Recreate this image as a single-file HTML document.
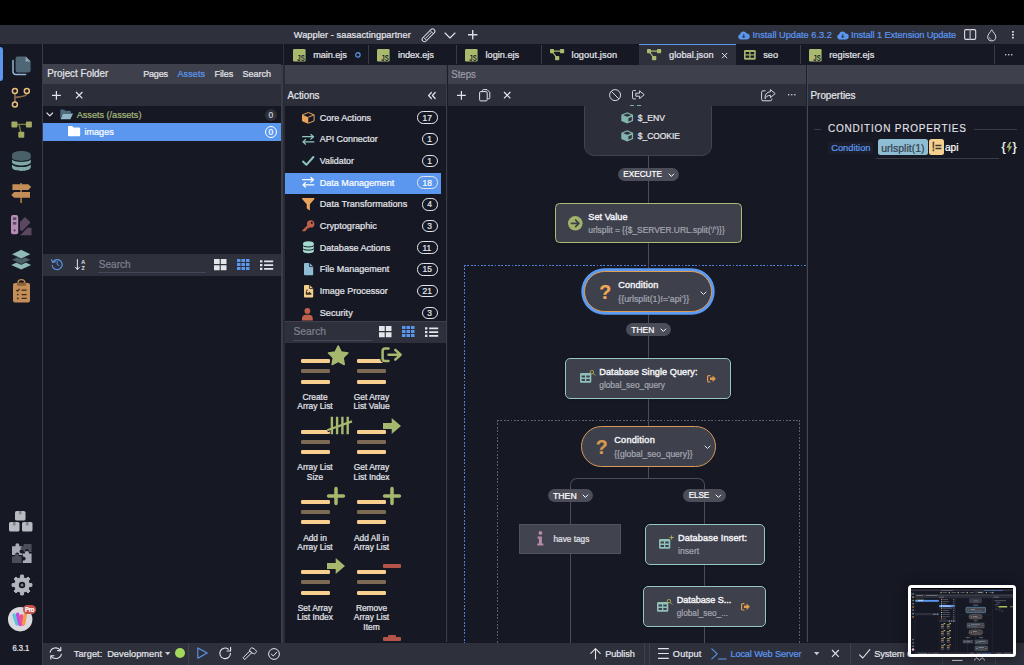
<!DOCTYPE html><html lang="en"><head><meta charset="utf-8"><title>Wappler - saasactingpartner</title><style>

html,body{margin:0;padding:0;background:#161824;}
body{width:1024px;height:665px;overflow:hidden;position:relative;font-family:"Liberation Sans",sans-serif;color:#e4e5ea;}
#app{position:absolute;left:0;top:0;width:1024px;height:665px;overflow:hidden;}
#app div,#app svg,#app span{position:absolute;box-sizing:border-box;}
#app span{white-space:nowrap;line-height:14px;height:14px;-webkit-text-stroke:0.22px currentColor;transform:scaleY(1.07);transform-origin:50% 52%;}
#app svg{overflow:visible;}

</style></head><body><div id="app">
<div style="left:0px;top:0px;width:1024px;height:25px;background:#000;"></div>
<div style="left:0px;top:25px;width:1024px;height:19px;background:#2e303c;"></div>
<div style="left:0px;top:44px;width:42px;height:621px;background:#161824;"></div>
<div style="left:42px;top:44px;width:1px;height:621px;background:#3a3c48;"></div>
<div style="left:0px;top:47px;width:2.5px;height:34px;background:#5b97ee;border-radius:0 3px 3px 0;"></div>
<div style="left:43px;top:64.2px;width:238.2px;height:19.8px;background:#3e404c;"></div>
<div style="left:43px;top:84px;width:238.2px;height:21.6px;background:#2c2e3a;"></div>
<div style="left:43px;top:123px;width:238.2px;height:18px;background:#5b97ee;"></div>
<div style="left:43px;top:254px;width:238.2px;height:22px;background:#2e303c;"></div>
<div style="left:97.5px;top:271.5px;width:108.5px;height:1.0px;background:#44475a;"></div>
<div style="left:283px;top:44px;width:1.2px;height:20.5px;background:#2e303c;"></div>
<div style="left:281.2px;top:64.5px;width:1.4px;height:578.0px;background:#3a3c48;"></div>
<div style="left:282.6px;top:64.5px;width:2.0px;height:578.0px;background:#292b37;"></div>
<div style="left:368px;top:45px;width:1px;height:19px;background:#3a3c48;"></div>
<div style="left:456px;top:45px;width:1px;height:19px;background:#3a3c48;"></div>
<div style="left:541px;top:45px;width:1px;height:19px;background:#3a3c48;"></div>
<div style="left:800px;top:45px;width:1px;height:19px;background:#3a3c48;"></div>
<div style="left:994px;top:45px;width:1px;height:19px;background:#3a3c48;"></div>
<div style="left:639px;top:44px;width:97px;height:21px;background:#2e303c;border-top:1.5px solid #5b97ee;"></div>
<div style="left:284.6px;top:64.5px;width:739.4px;height:19.5px;background:#3e404c;"></div>
<div style="left:445.9px;top:64.5px;width:1.1px;height:577.5px;background:#3a3c48;"></div>
<div style="left:447px;top:64.5px;width:1px;height:577.5px;background:#1c1e29;"></div>
<div style="left:806px;top:64.5px;width:1px;height:577.5px;background:#1c1e29;"></div>
<div style="left:807px;top:64.5px;width:1px;height:577.5px;background:#454753;"></div>
<div style="left:284.6px;top:84px;width:161.3px;height:21.6px;background:#2c2e3a;"></div>
<div style="left:448px;top:84px;width:358px;height:21.6px;background:#2c2e3a;"></div>
<div style="left:808px;top:84px;width:216px;height:21.6px;background:#2c2e3a;"></div>
<div style="left:284.6px;top:172.5px;width:156.4px;height:21.5px;background:#5b97ee;"></div>
<div style="left:284.6px;top:320.5px;width:161.3px;height:22.5px;background:#2e303c;border-top:1px solid #3e404c;"></div>
<div style="left:293px;top:339.5px;width:79px;height:0.8px;background:#44475a;"></div>
<div style="left:43px;top:642.5px;width:981px;height:22.5px;background:#2e303c;"></div>
<div style="left:188px;top:643px;width:1px;height:22px;background:#3f414d;"></div>
<div style="left:644px;top:643px;width:1px;height:22px;background:#3f414d;"></div>
<div style="left:649px;top:643px;width:1px;height:22px;background:#3f414d;"></div>
<div style="left:850px;top:643px;width:1px;height:22px;background:#3f414d;"></div>
<div style="left:942px;top:643px;width:1px;height:22px;background:#3f414d;"></div>
<div style="left:995px;top:643px;width:1px;height:22px;background:#3f414d;"></div>
<div style="left:464px;top:265px;width:342px;height:1px;background:repeating-linear-gradient(90deg,#4f82d6 0 1.8px,transparent 1.8px 3.4px);"></div>
<div style="left:464px;top:265px;width:1px;height:377.5px;background:repeating-linear-gradient(180deg,#4f82d6 0 1.8px,transparent 1.8px 3.4px);"></div>
<div style="left:497px;top:420px;width:302.5px;height:1px;background:repeating-linear-gradient(90deg,#5e606c 0 1.8px,transparent 1.8px 3.4px);"></div>
<div style="left:497px;top:420px;width:1px;height:222.5px;background:repeating-linear-gradient(180deg,#5e606c 0 1.8px,transparent 1.8px 3.4px);"></div>
<div style="left:799px;top:420px;width:1px;height:222.5px;background:repeating-linear-gradient(180deg,#5e606c 0 1.8px,transparent 1.8px 3.4px);"></div>
<div style="left:647.5px;top:156px;width:1.0px;height:322px;background:#4b4d59;"></div>
<div style="left:570px;top:478px;width:135px;height:22px;border:1px solid #4b4d59;border-bottom:none;border-radius:7px 7px 0 0;"></div>
<div style="left:570px;top:495px;width:1px;height:147.5px;background:#4b4d59;"></div>
<div style="left:704px;top:495px;width:1px;height:147.5px;background:#4b4d59;"></div>
<div style="left:584px;top:96px;width:128px;height:60px;background:#2c2e3a;border:1px solid #41434f;border-radius:10px;"></div>
<div style="left:448px;top:84px;width:358px;height:21.6px;background:#2c2e3a;"></div>
<div style="left:617.5px;top:168px;width:61.5px;height:13.3px;background:#4b4d59;border-radius:7px;"></div>
<div style="left:625.5px;top:323px;width:45.0px;height:13.3px;background:#4b4d59;border-radius:7px;"></div>
<div style="left:547.5px;top:488.8px;width:45.5px;height:13.3px;background:#4b4d59;border-radius:7px;"></div>
<div style="left:683px;top:488.8px;width:42.75px;height:13.3px;background:#4b4d59;border-radius:7px;"></div>
<div style="left:554.5px;top:203px;width:187.5px;height:40.3px;background:#3e404c;border:1.5px solid #aabf74;border-radius:4.5px;box-shadow:0 0 3px rgba(0,0,0,.45);"></div>
<div style="left:584.2px;top:271.1px;width:127.8px;height:41.2px;background:#3e404c;border:1.4px solid #e09c55;border-radius:21px;box-shadow:0 0 0 2.7px #5b9cf2;"></div>
<div style="left:565px;top:358px;width:166px;height:40.6px;background:#3e404c;border:1.6px solid #93c7c2;border-radius:5px;box-shadow:0 0 3px rgba(0,0,0,.45);"></div>
<div style="left:580.5px;top:426px;width:135.5px;height:41.2px;background:#3e404c;border:1.5px solid #d89a55;border-radius:21px;"></div>
<div style="left:519px;top:524px;width:102px;height:30px;background:#41434f;border:1px solid #50525e;"></div>
<div style="left:644.5px;top:524px;width:120.0px;height:40.6px;background:#3e404c;border:1.6px solid #93c7c2;border-radius:5px;box-shadow:0 0 3px rgba(0,0,0,.45);"></div>
<div style="left:643px;top:586px;width:122.8px;height:41px;background:#3e404c;border:1.6px solid #93c7c2;border-radius:5px;box-shadow:0 0 3px rgba(0,0,0,.45);"></div>
<div style="left:43px;top:642.5px;width:981px;height:22.5px;background:#2e303c;"></div>
<div style="left:188px;top:643px;width:1px;height:22px;background:#3f414d;"></div>
<div style="left:644px;top:643px;width:1px;height:22px;background:#3f414d;"></div>
<div style="left:649px;top:643px;width:1px;height:22px;background:#3f414d;"></div>
<div style="left:850px;top:643px;width:1px;height:22px;background:#3f414d;"></div>
<div style="left:942px;top:643px;width:1px;height:22px;background:#3f414d;"></div>
<div style="left:995px;top:643px;width:1px;height:22px;background:#3f414d;"></div>
<div style="left:417.25px;top:111.39999999999999px;width:20.75px;height:12.4px;border:1.1px solid #e4e5ea;border-radius:6.2px;"></div>
<div style="left:421.75px;top:133.08px;width:16.25px;height:12.4px;border:1.1px solid #e4e5ea;border-radius:6.2px;"></div>
<div style="left:421.75px;top:154.76px;width:16.25px;height:12.4px;border:1.1px solid #e4e5ea;border-radius:6.2px;"></div>
<div style="left:417.25px;top:176.44px;width:20.75px;height:12.4px;border:1.1px solid #e4e5ea;border-radius:6.2px;"></div>
<div style="left:421.75px;top:198.12px;width:16.25px;height:12.4px;border:1.1px solid #e4e5ea;border-radius:6.2px;"></div>
<div style="left:421.75px;top:219.8px;width:16.25px;height:12.4px;border:1.1px solid #e4e5ea;border-radius:6.2px;"></div>
<div style="left:417.25px;top:241.48px;width:20.75px;height:12.4px;border:1.1px solid #e4e5ea;border-radius:6.2px;"></div>
<div style="left:417.25px;top:263.16px;width:20.75px;height:12.4px;border:1.1px solid #e4e5ea;border-radius:6.2px;"></div>
<div style="left:417.25px;top:284.84px;width:20.75px;height:12.4px;border:1.1px solid #e4e5ea;border-radius:6.2px;"></div>
<div style="left:421.75px;top:306.52000000000004px;width:16.25px;height:12.4px;border:1.1px solid #e4e5ea;border-radius:6.2px;"></div>
<div style="left:814.25px;top:128.5px;width:7.0px;height:1.0px;background:#3a3c48;"></div>
<div style="left:973.5px;top:128.5px;width:43.75px;height:1.0px;background:#3a3c48;"></div>
<div style="left:828px;top:141.5px;width:44.5px;height:12.0px;background:#1b1e2b;border-radius:2px;"></div>
<div style="left:878px;top:139.25px;width:49.5px;height:15.75px;background:#8fbdd3;border-radius:2.5px;"></div>
<div style="left:929.25px;top:139.25px;width:14.5px;height:15.75px;background:#f6d08d;border-radius:2.5px;"></div>
<div style="left:875.5px;top:157.6px;width:123.0px;height:0.9px;background:#3a3c48;"></div>
<svg style="left:421.8px;top:28.5px;" width="13" height="12.6" viewBox="0 0 13 12.6"><g transform="rotate(-45 6.5 6.3)"><rect x="-1.6" y="4" width="16.2" height="4.6" rx="2.3" fill="none" stroke="#dcdde2" stroke-width="1"/><path d="M1.6 4.2 V8.4 M11 4.2 V8.4 M2 6.3 H10.6" stroke="#dcdde2" stroke-width="0.9"/></g></svg>
<svg style="left:445px;top:32.7px;" width="10" height="5" viewBox="0 0 10 5"><path d="M0 0 L5 5 L10 0" fill="none" stroke="#e4e5ea" stroke-width="1.1" stroke-linecap="round" stroke-linejoin="round"/></svg>
<svg style="left:467.5px;top:30.000000000000004px;" width="9.4" height="9.4" viewBox="0 0 9.4 9.4"><path d="M4.7 0 V9.4 M0 4.7 H9.4" fill="none" stroke="#dcdde2" stroke-width="1.4"/></svg>
<svg style="left:738.2px;top:30.5px;" width="11.5" height="8.5" viewBox="0 0 11.5 8.5"><path d="M2.6 8.4 a2.6 2.6 0 0 1 -0.5 -5.1 a3.4 3.4 0 0 1 6.5 -0.7 a2.9 2.9 0 0 1 0.4 5.8 Z" fill="#5b97ee"/><path d="M5.75 3.2 V6.6 M4.3 5.3 L5.75 6.8 L7.2 5.3" fill="none" stroke="#2e303c" stroke-width="1"/></svg>
<svg style="left:836.7px;top:30.5px;" width="11.5" height="8.5" viewBox="0 0 11.5 8.5"><path d="M2.6 8.4 a2.6 2.6 0 0 1 -0.5 -5.1 a3.4 3.4 0 0 1 6.5 -0.7 a2.9 2.9 0 0 1 0.4 5.8 Z" fill="#5b97ee"/><path d="M5.75 3.2 V6.6 M4.3 5.3 L5.75 6.8 L7.2 5.3" fill="none" stroke="#2e303c" stroke-width="1"/></svg>
<svg style="left:963.8px;top:29.1px;" width="12.3" height="11" viewBox="0 0 12.3 11"><rect x="0.6" y="0.6" width="11.1" height="9.8" rx="1.3" fill="none" stroke="#dcdde2" stroke-width="1.1"/><path d="M6.15 0.6 V10.4" stroke="#9a9ca6" stroke-width="1.5"/></svg>
<svg style="left:986.75px;top:28.5px;" width="9.5" height="12" viewBox="0 0 9.5 12"><path d="M4.75 0.8 C6.2 3.2 8.8 5.6 8.8 7.8 a4.05 4.05 0 0 1 -8.1 0 C0.7 5.6 3.3 3.2 4.75 0.8 Z" fill="none" stroke="#dcdde2" stroke-width="1"/><path d="M2.2 8 a2.6 2.6 0 0 0 2.4 2.4" fill="none" stroke="#9a9ca6" stroke-width="0.9"/></svg>
<svg style="left:1012.3px;top:31px;" width="1.8" height="7.6" viewBox="0 0 1.8 7.6"><rect x="0" y="0" width="1.8" height="1.7" fill="#dcdde2"/><rect x="0" y="2.9" width="1.8" height="1.7" fill="#dcdde2"/><rect x="0" y="5.8" width="1.8" height="1.7" fill="#dcdde2"/></svg>
<svg style="left:292.8px;top:48.8px;" width="12.6" height="12.6" viewBox="0 0 12.6 12.6"><rect width="12.6" height="12.6" rx="1.3" fill="#a9b96e"/><text x="4.3" y="11.6" textLength="7.4" lengthAdjust="spacingAndGlyphs" font-family="Liberation Sans, sans-serif" font-weight="700" font-size="8.8" fill="#20222c">JS</text></svg>
<svg style="left:377.2px;top:48.8px;" width="12.6" height="12.6" viewBox="0 0 12.6 12.6"><rect width="12.6" height="12.6" rx="1.3" fill="#a9b96e"/><text x="4.3" y="11.6" textLength="7.4" lengthAdjust="spacingAndGlyphs" font-family="Liberation Sans, sans-serif" font-weight="700" font-size="8.8" fill="#20222c">JS</text></svg>
<svg style="left:464.8px;top:48.8px;" width="12.6" height="12.6" viewBox="0 0 12.6 12.6"><rect width="12.6" height="12.6" rx="1.3" fill="#a9b96e"/><text x="4.3" y="11.6" textLength="7.4" lengthAdjust="spacingAndGlyphs" font-family="Liberation Sans, sans-serif" font-weight="700" font-size="8.8" fill="#20222c">JS</text></svg>
<svg style="left:808.8px;top:48.8px;" width="12.6" height="12.6" viewBox="0 0 12.6 12.6"><rect width="12.6" height="12.6" rx="1.3" fill="#a9b96e"/><text x="4.3" y="11.6" textLength="7.4" lengthAdjust="spacingAndGlyphs" font-family="Liberation Sans, sans-serif" font-weight="700" font-size="8.8" fill="#20222c">JS</text></svg>
<svg style="left:355.1px;top:52.3px;" width="5.8" height="5.8" viewBox="0 0 5.8 5.8"><circle cx="2.9" cy="2.9" r="2.2" fill="none" stroke="#5b97ee" stroke-width="1.2"/></svg>
<svg style="left:549.6px;top:49px;" width="14.2" height="11.4" viewBox="0 0 14.2 11.4"><path d="M3.6 2.1 H10.6 M3 3.6 L6 7.6" fill="none" stroke="#a9b96e" stroke-width="1.1"/><rect x="0" y="0" width="4" height="4.2" rx="0.7" fill="#a9b96e"/><rect x="10" y="0" width="4.2" height="4.2" rx="0.7" fill="#a9b96e"/><rect x="5" y="7" width="4.3" height="4.3" rx="0.7" fill="#a9b96e"/></svg>
<svg style="left:647.1px;top:49px;" width="14.2" height="11.4" viewBox="0 0 14.2 11.4"><path d="M3.6 2.1 H10.6 M3 3.6 L6 7.6" fill="none" stroke="#a9b96e" stroke-width="1.1"/><rect x="0" y="0" width="4" height="4.2" rx="0.7" fill="#a9b96e"/><rect x="10" y="0" width="4.2" height="4.2" rx="0.7" fill="#a9b96e"/><rect x="5" y="7" width="4.3" height="4.3" rx="0.7" fill="#a9b96e"/></svg>
<svg style="left:721.9px;top:52.6px;" width="5.2" height="5.2" viewBox="0 0 5.2 5.2"><path d="M0 0 L5.2 5.2 M5.2 0 L0 5.2" fill="none" stroke="#e4e5ea" stroke-width="1"/></svg>
<svg style="left:744px;top:50.25px;" width="11.75" height="9.75" viewBox="0 0 11.75 9.75"><rect width="11.75" height="9.75" rx="1.2" fill="#a5b56b"/><path d="M1.6 2.1 h3.6 v2.2 h-3.6z M6.5 2.1 h3.6 v2.2 h-3.6z M1.6 5.6 h3.6 v2.2 h-3.6z M6.5 5.6 h3.6 v2.2 h-3.6z" fill="#161824"/></svg>
<svg style="left:1004.75px;top:54.25px;" width="7.5" height="1.5" viewBox="0 0 7.5 1.5"><circle cx="0.75" cy="0.75" r="0.75" fill="#e4e5ea"/><circle cx="3.75" cy="0.75" r="0.75" fill="#e4e5ea"/><circle cx="6.75" cy="0.75" r="0.75" fill="#e4e5ea"/></svg>
<svg style="left:52.35px;top:90.6px;" width="8.8" height="8.8" viewBox="0 0 8.8 8.8"><path d="M4.4 0 V8.8 M0 4.4 H8.8" fill="none" stroke="#e4e5ea" stroke-width="1.2"/></svg>
<svg style="left:76.3px;top:91.8px;" width="6.4" height="6.4" viewBox="0 0 6.4 6.4"><path d="M0 0 L6.4 6.4 M6.4 0 L0 6.4" fill="none" stroke="#e4e5ea" stroke-width="1.2"/></svg>
<svg style="left:46.7px;top:113.19999999999999px;" width="5.6" height="2.8" viewBox="0 0 5.6 2.8"><path d="M0 0 L2.8 2.8 L5.6 0" fill="none" stroke="#e4e5ea" stroke-width="1.1" stroke-linecap="round" stroke-linejoin="round"/></svg>
<svg style="left:60px;top:108.8px;" width="13.2" height="10.6" viewBox="0 0 13.2 10.6"><path d="M0.3 9.6 V1.4 a1 1 0 0 1 1 -1 h2.8 l1.2 1.3 h4.6 a1 1 0 0 1 1 1 v1.2 H3.2 Z" fill="#4f6a7a"/><path d="M0.5 10.2 L3 4.6 H13 L10.4 10.2 Z" fill="#8fb5c9"/></svg>
<svg style="left:68px;top:126.4px;" width="12.2" height="10.4" viewBox="0 0 12.2 10.4"><path d="M0 9.2 V1.2 a1.1 1.1 0 0 1 1.1 -1.1 h3.1 l1.4 1.5 h5.5 a1.1 1.1 0 0 1 1.1 1.1 v6.5 a1.1 1.1 0 0 1 -1.1 1.1 h-10 a1.1 1.1 0 0 1 -1.1 -1.1 Z" fill="#fff"/></svg>
<div style="left:265px;top:108.6px;width:12px;height:12.0px;background:#2e303c;border-radius:6px;"></div>
<div style="left:265px;top:126.2px;width:12px;height:12.0px;border:1px solid #fff;border-radius:6px;"></div>
<svg style="left:51px;top:258.3px;" width="12" height="12" viewBox="0 0 12 12"><path d="M2.2 3.6 A5 5 0 1 1 1.2 7.2" fill="none" stroke="#5b97ee" stroke-width="1.1" stroke-linecap="round"/><path d="M0.6 1.6 L1.6 4.4 L4.5 3.8" fill="none" stroke="#5b97ee" stroke-width="1.1" stroke-linecap="round" stroke-linejoin="round"/><path d="M6.2 3.6 V6.4 L8 7.6" fill="none" stroke="#5b97ee" stroke-width="1" stroke-linecap="round"/></svg>
<svg style="left:74.5px;top:258.8px;" width="11.5" height="11.5" viewBox="0 0 11.5 11.5"><path d="M2.4 0.5 V10.4 M0.4 8.2 L2.4 10.6 L4.4 8.2" fill="none" stroke="#e4e5ea" stroke-width="1" stroke-linecap="round" stroke-linejoin="round"/><text x="6.2" y="4.6" font-family="Liberation Sans, sans-serif" font-weight="700" font-size="5.4" fill="#e4e5ea">A</text><text x="6.4" y="10.8" font-family="Liberation Sans, sans-serif" font-weight="700" font-size="5.4" fill="#e4e5ea">Z</text></svg>
<svg style="left:213.9px;top:258.9px;" width="12.5" height="11.25" viewBox="0 0 12.5 11.25"><path d="M0 0 h5.7 v5 h-5.7z M6.8 0 h5.7 v5 h-5.7z M0 6.2 h5.7 v5 h-5.7z M6.8 6.2 h5.7 v5 h-5.7z" fill="#e4e5ea"/></svg>
<svg style="left:236.75px;top:258.9px;" width="12.5" height="11.25" viewBox="0 0 12.5 11.25"><path d="M0.0 0.0 h3.5 v3 h-3.5z M0.0 4.0 h3.5 v3 h-3.5z M0.0 8.0 h3.5 v3 h-3.5z M4.5 0.0 h3.5 v3 h-3.5z M4.5 4.0 h3.5 v3 h-3.5z M4.5 8.0 h3.5 v3 h-3.5z M9.0 0.0 h3.5 v3 h-3.5z M9.0 4.0 h3.5 v3 h-3.5z M9.0 8.0 h3.5 v3 h-3.5z " fill="#5b97ee"/></svg>
<svg style="left:259.75px;top:259.7px;" width="13.25" height="11" viewBox="0 0 13.25 11"><path d="M0 0.2 h2.4 v2.4 h-2.4z M0 3.95 h2.4 v2.4 h-2.4z M0 7.7 h2.4 v2.4 h-2.4z M4.1 0.6 h9.1 v1.6 h-9.1z M4.1 4.35 h9.1 v1.6 h-9.1z M4.1 8.1 h9.1 v1.6 h-9.1z" fill="#e4e5ea"/></svg>
<svg style="left:379px;top:326.2px;" width="12.5" height="11.25" viewBox="0 0 12.5 11.25"><path d="M0 0 h5.7 v5 h-5.7z M6.8 0 h5.7 v5 h-5.7z M0 6.2 h5.7 v5 h-5.7z M6.8 6.2 h5.7 v5 h-5.7z" fill="#e4e5ea"/></svg>
<svg style="left:402.25px;top:326.2px;" width="12.5" height="11.25" viewBox="0 0 12.5 11.25"><path d="M0.0 0.0 h3.5 v3 h-3.5z M0.0 4.0 h3.5 v3 h-3.5z M0.0 8.0 h3.5 v3 h-3.5z M4.5 0.0 h3.5 v3 h-3.5z M4.5 4.0 h3.5 v3 h-3.5z M4.5 8.0 h3.5 v3 h-3.5z M9.0 0.0 h3.5 v3 h-3.5z M9.0 4.0 h3.5 v3 h-3.5z M9.0 8.0 h3.5 v3 h-3.5z " fill="#5b97ee"/></svg>
<svg style="left:425.1px;top:326.9px;" width="13.25" height="11" viewBox="0 0 13.25 11"><path d="M0 0.2 h2.4 v2.4 h-2.4z M0 3.95 h2.4 v2.4 h-2.4z M0 7.7 h2.4 v2.4 h-2.4z M4.1 0.6 h9.1 v1.6 h-9.1z M4.1 4.35 h9.1 v1.6 h-9.1z M4.1 8.1 h9.1 v1.6 h-9.1z" fill="#e4e5ea"/></svg>
<svg style="left:427.5px;top:92.3px;" width="8" height="7" viewBox="0 0 8 7"><path d="M3.4 0.5 L0.6 3.5 L3.4 6.5 M7.2 0.5 L4.4 3.5 L7.2 6.5" fill="none" stroke="#e4e5ea" stroke-width="1.2" stroke-linecap="round" stroke-linejoin="round"/></svg>
<svg style="left:301.9px;top:111.69999999999999px;" width="12.6" height="11.8" viewBox="0 0 12.6 11.8"><path d="M6.3 0.5 L12.1 2.8 V8.9 L6.3 11.3 L0.5 8.9 V2.8 Z" fill="none" stroke="#e8a45c" stroke-width="1"/><path d="M0.5 2.8 L6.3 5.2 V11.3 L0.5 8.9 Z" fill="#e8a45c"/><path d="M6.3 5.2 L12.1 2.8" stroke="#e8a45c" stroke-width="1"/></svg>
<svg style="left:302px;top:133.98px;" width="12.5" height="10.6" viewBox="0 0 12.5 10.6"><path d="M0.6 2.7 H11.4 M8.9 0.4 L11.6 2.7 L8.9 5 M11.9 7.9 H1.1 M3.6 5.6 L0.9 7.9 L3.6 10.2" fill="none" stroke="#8ec5bd" stroke-width="1.25" stroke-linecap="round" stroke-linejoin="round"/></svg>
<svg style="left:302px;top:177.33999999999997px;" width="12.5" height="10.6" viewBox="0 0 12.5 10.6"><path d="M0.6 2.7 H11.4 M8.9 0.4 L11.6 2.7 L8.9 5 M11.9 7.9 H1.1 M3.6 5.6 L0.9 7.9 L3.6 10.2" fill="none" stroke="#fff" stroke-width="1.25" stroke-linecap="round" stroke-linejoin="round"/></svg>
<svg style="left:302px;top:156.15999999999997px;" width="12.4" height="10" viewBox="0 0 12.4 10"><path d="M1 5.6 L4.4 8.8 L11.4 1" fill="none" stroke="#8ec5bd" stroke-width="2" stroke-linecap="round" stroke-linejoin="round"/></svg>
<svg style="left:302px;top:198.32px;" width="12.6" height="12.4" viewBox="0 0 12.6 12.4"><path d="M0.6 0 H12 a0.6 0.6 0 0 1 0.45 1 L7.9 6.2 V11.8 a0.5 0.5 0 0 1 -0.8 0.4 L5 10.6 a0.8 0.8 0 0 1 -0.3 -0.6 V6.2 L0.15 1 A0.6 0.6 0 0 1 0.6 0 Z" fill="#e8a45c"/></svg>
<svg style="left:302px;top:220.3px;" width="12.6" height="11.6" viewBox="0 0 12.6 11.6"><circle cx="8.7" cy="3.9" r="3.7" fill="#c0604a"/><circle cx="9.8" cy="2.8" r="1.1" fill="#161824"/><path d="M6.4 5.2 L0.9 10.7 h2.2 v-1.5 h1.5 v-1.5 h1.4 L7.6 6.6" fill="#c0604a" stroke="#c0604a" stroke-width="1.3" stroke-linejoin="round"/></svg>
<svg style="left:303px;top:241.48px;" width="10.8" height="12.4" viewBox="0 0 10.8 12.4"><path d="M0 2.4 C0 -0.6 10.8 -0.6 10.8 2.4 V10 C10.8 13 0 13 0 10 Z" fill="#a5dccf"/><path d="M0 4.5 C1 6.4 9.8 6.4 10.8 4.5 M0 7.7 C1 9.6 9.8 9.6 10.8 7.7" fill="none" stroke="#161824" stroke-width="1"/></svg>
<svg style="left:303.6px;top:263.26px;" width="9.2" height="12.2" viewBox="0 0 9.2 12.2"><path d="M0 1 a1 1 0 0 1 1 -1 H5.6 L9.2 3.6 V11.2 a1 1 0 0 1 -1 1 H1 a1 1 0 0 1 -1 -1 Z" fill="#8fbdd3"/><path d="M5.6 0 V3.6 H9.2" fill="none" stroke="#161824" stroke-width="0.8"/></svg>
<svg style="left:303.6px;top:284.84px;" width="9.2" height="12.4" viewBox="0 0 9.2 12.4"><path d="M0 1 a1 1 0 0 1 1 -1 H5.6 L9.2 3.6 V11.4 a1 1 0 0 1 -1 1 H1 a1 1 0 0 1 -1 -1 Z" fill="#f5cf8c"/><path d="M5.6 0 V3.6 H9.2" fill="none" stroke="#161824" stroke-width="0.8"/><path d="M1.8 9.8 V6.2 h1 l1 2 l1.6 -1.4 l2 1.6 v1.4 Z" fill="#3a3020"/><circle cx="3" cy="5.3" r="0.8" fill="#3a3020"/></svg>
<svg style="left:302.4px;top:307.72px;" width="10.8" height="12.4" viewBox="0 0 10.8 12.4"><circle cx="5.4" cy="2.9" r="2.9" fill="#c0604a"/><path d="M0 12.4 V10.8 a4 4 0 0 1 4 -4 h2.8 a4 4 0 0 1 4 4 V12.4 Z" fill="#c0604a"/></svg>
<div style="left:300.8px;top:359.2px;width:29.0px;height:4.2px;background:#f8cf8e;border-radius:1.2px;"></div>
<div style="left:300.8px;top:369.3px;width:29.0px;height:4.2px;background:#7d6a55;border-radius:1.2px;"></div>
<div style="left:300.8px;top:379.59999999999997px;width:29.0px;height:4.2px;background:#f8cf8e;border-radius:1.2px;"></div>
<div style="left:356.8px;top:359.2px;width:29.0px;height:4.2px;background:#f8cf8e;border-radius:1.2px;"></div>
<div style="left:356.8px;top:369.3px;width:29.0px;height:4.2px;background:#7d6a55;border-radius:1.2px;"></div>
<div style="left:356.8px;top:379.59999999999997px;width:29.0px;height:4.2px;background:#f8cf8e;border-radius:1.2px;"></div>
<div style="left:300.8px;top:429.5px;width:29.0px;height:4.2px;background:#f8cf8e;border-radius:1.2px;"></div>
<div style="left:300.8px;top:439.6px;width:29.0px;height:4.2px;background:#7d6a55;border-radius:1.2px;"></div>
<div style="left:300.8px;top:449.9px;width:29.0px;height:4.2px;background:#f8cf8e;border-radius:1.2px;"></div>
<div style="left:356.8px;top:429.5px;width:29.0px;height:4.2px;background:#f8cf8e;border-radius:1.2px;"></div>
<div style="left:356.8px;top:439.6px;width:29.0px;height:4.2px;background:#7d6a55;border-radius:1.2px;"></div>
<div style="left:356.8px;top:449.9px;width:29.0px;height:4.2px;background:#f8cf8e;border-radius:1.2px;"></div>
<div style="left:300.8px;top:499.79999999999995px;width:29.0px;height:4.2px;background:#f8cf8e;border-radius:1.2px;"></div>
<div style="left:300.8px;top:509.9px;width:29.0px;height:4.2px;background:#7d6a55;border-radius:1.2px;"></div>
<div style="left:300.8px;top:520.1999999999999px;width:29.0px;height:4.2px;background:#f8cf8e;border-radius:1.2px;"></div>
<div style="left:356.8px;top:499.79999999999995px;width:29.0px;height:4.2px;background:#f8cf8e;border-radius:1.2px;"></div>
<div style="left:356.8px;top:509.9px;width:29.0px;height:4.2px;background:#7d6a55;border-radius:1.2px;"></div>
<div style="left:356.8px;top:520.1999999999999px;width:29.0px;height:4.2px;background:#f8cf8e;border-radius:1.2px;"></div>
<div style="left:300.8px;top:570.1px;width:29.0px;height:4.2px;background:#f8cf8e;border-radius:1.2px;"></div>
<div style="left:300.8px;top:580.2px;width:29.0px;height:4.2px;background:#7d6a55;border-radius:1.2px;"></div>
<div style="left:300.8px;top:590.5px;width:29.0px;height:4.2px;background:#f8cf8e;border-radius:1.2px;"></div>
<div style="left:356.8px;top:570.1px;width:29.0px;height:4.2px;background:#f8cf8e;border-radius:1.2px;"></div>
<div style="left:356.8px;top:580.2px;width:29.0px;height:4.2px;background:#7d6a55;border-radius:1.2px;"></div>
<div style="left:356.8px;top:590.5px;width:29.0px;height:4.2px;background:#f8cf8e;border-radius:1.2px;"></div>
<svg style="left:327.6px;top:346.3px;" width="20.4" height="20.4" viewBox="0 0 20.4 20.4"><polygon points="10.20,0.00 13.20,6.07 19.90,7.05 15.05,11.78 16.20,18.45 10.20,15.30 4.20,18.45 5.35,11.78 0.50,7.05 7.20,6.07" fill="none" stroke="#161824" stroke-width="4" stroke-linejoin="round"/><polygon points="10.20,0.00 13.20,6.07 19.90,7.05 15.05,11.78 16.20,18.45 10.20,15.30 4.20,18.45 5.35,11.78 0.50,7.05 7.20,6.07" fill="#a6b86e" stroke="#a6b86e" stroke-width="1.6" stroke-linejoin="round"/></svg>
<svg style="left:381px;top:347.2px;" width="22" height="16" viewBox="0 0 22 16"><path d="M7.5 1.5 H4.2 a2.6 2.6 0 0 0 -2.6 2.6 V11.4 a2.6 2.6 0 0 0 2.6 2.6 H7.5 M7.5 7.75 H19 M14.3 2.8 L19.6 7.75 L14.3 12.7" fill="none" stroke="#161824" stroke-width="5" stroke-linecap="round" stroke-linejoin="round"/><path d="M7.5 1.5 H4.2 a2.6 2.6 0 0 0 -2.6 2.6 V11.4 a2.6 2.6 0 0 0 2.6 2.6 H7.5" fill="none" stroke="#a6b86e" stroke-width="2.5" stroke-linecap="round"/><path d="M7.5 7.75 H19 M14.3 2.8 L19.6 7.75 L14.3 12.7" fill="none" stroke="#a6b86e" stroke-width="2.5" stroke-linecap="round" stroke-linejoin="round"/></svg>
<svg style="left:326px;top:416px;" width="27" height="19" viewBox="0 0 27 19"><path d="M1.2 14.2 L26 5.4" stroke="#161824" stroke-width="4.4" fill="none"/><path d="M5.9 0.7 V18.3 M11.1 0.7 V18.3 M16.4 0.7 V18.3 M21.7 0.7 V18.3" stroke="#a6b86e" stroke-width="2.4" fill="none"/><path d="M1.2 14.2 L26 5.4" stroke="#a6b86e" stroke-width="2.2" fill="none"/></svg>
<svg style="left:382.9px;top:417.6px;" width="18" height="16" viewBox="0 0 18 16"><path d="M0 5 H8.7 V0 L18 8 L8.7 16 V11 H0 Z" fill="#a6b86e"/></svg>
<svg style="left:326.5px;top:487px;" width="18" height="18" viewBox="0 0 18 18"><path d="M9 1.6 V16.4 M1.6 9 H16.4" stroke="#a6b86e" stroke-width="3.5" stroke-linecap="round" fill="none"/></svg>
<svg style="left:382.6px;top:487px;" width="18" height="18" viewBox="0 0 18 18"><path d="M9 1.6 V16.4 M1.6 9 H16.4" stroke="#a6b86e" stroke-width="3.5" stroke-linecap="round" fill="none"/></svg>
<svg style="left:326.6px;top:558.4px;" width="18" height="16" viewBox="0 0 18 16"><path d="M0 5 H8.7 V0 L18 8 L8.7 16 V11 H0 Z" fill="#a6b86e"/></svg>
<div style="left:382.5px;top:563.5px;width:18.0px;height:4.0px;background:#b5534a;border-radius:1px;"></div>
<div style="left:382.5px;top:637px;width:18.0px;height:4px;background:#b5534a;border-radius:1px;"></div>
<div style="left:387.5px;top:634.6px;width:8.0px;height:2.4px;background:#b5534a;border-radius:1px 1px 0 0;"></div>
<svg style="left:12px;top:56px;" width="19" height="20" viewBox="0 0 19 20"><path d="M1 4.5 V15.6 a3 3 0 0 0 3 3 H13.6" fill="none" stroke="#8fb5d0" stroke-width="1.5" stroke-linecap="round"/><path d="M3.6 2.2 a1.8 1.8 0 0 1 1.8 -1.8 H13.6 L18.6 5.4 V14.6 a1.8 1.8 0 0 1 -1.8 1.8 H5.4 a1.8 1.8 0 0 1 -1.8 -1.8 Z" fill="#4e6676"/><path d="M13.6 0.4 V5.4 H18.6 Z" fill="#8fa9b8"/></svg>
<svg style="left:11px;top:87px;" width="20" height="22" viewBox="0 0 20 22"><path d="M3.9 6.5 V15 M3.9 11.2 C3.9 9 15.8 11 15.8 6.5" fill="none" stroke="#8a6c4c" stroke-width="1.6"/><circle cx="3.9" cy="4" r="2.5" fill="#161824" stroke="#ecbc7c" stroke-width="1.5"/><circle cx="15.8" cy="4" r="2.5" fill="#161824" stroke="#ecbc7c" stroke-width="1.5"/><circle cx="3.9" cy="17.5" r="2.5" fill="#161824" stroke="#ecbc7c" stroke-width="1.5"/></svg>
<svg style="left:10.5px;top:121px;" width="21" height="17" viewBox="0 0 21 17"><path d="M5 3.4 H16 M8 3.4 L10.4 13.8" fill="none" stroke="#7a8048" stroke-width="1.3"/><rect x="0.4" y="0.4" width="6" height="6" rx="1" fill="#a3aa62"/><rect x="14.9" y="0.4" width="6" height="6" rx="1" fill="#a3aa62"/><rect x="7.3" y="10.8" width="6" height="6" rx="1" fill="#a3aa62"/></svg>
<svg style="left:12px;top:151px;" width="18.8" height="20" viewBox="0 0 18.8 20"><path d="M0 4 C0 -1.2 18.8 -1.2 18.8 4 V6.6 C18.8 11 0 11 0 6.6 Z" fill="#4a6068"/><path d="M0 8.6 C2 11.8 16.8 11.8 18.8 8.6 V11.4 C16.8 15.4 2 15.4 0 11.4 Z" fill="#7fa9a4"/><path d="M0 13.4 C2 16.8 16.8 16.8 18.8 13.4 V16 C18.8 21.2 0 21.2 0 16 Z" fill="#7fa9a4"/></svg>
<svg style="left:11px;top:183px;" width="20.5" height="20" viewBox="0 0 20.5 20"><path d="M9.2 0 h1.8 v20 h-1.8z" fill="#9a6e40"/><path d="M1.4 1.2 H17.2 L20.2 4.1 L17.2 7 H1.4 Z M19 9 H3.2 L0.2 11.9 L3.2 14.8 H19 Z" fill="#c48e58"/></svg>
<svg style="left:10.5px;top:214.8px;" width="21" height="20.4" viewBox="0 0 21 20.4"><rect x="0" y="0" width="7.2" height="19.2" rx="2" fill="#b38db3"/><rect x="1.9" y="2.4" width="3.4" height="2.6" fill="#5c4763"/><rect x="1.9" y="7" width="3.4" height="2.6" fill="#5c4763"/><circle cx="3.6" cy="15.4" r="1.1" fill="#5c4763"/><path d="M9 14.4 V7 L14 2 L19.6 7.6 L11 16.2 Z" fill="#5c4763"/><path d="M9.2 20.2 L16.6 12.8 H20.5 V20.2 Z" fill="#5c4763"/></svg>
<svg style="left:11px;top:249.4px;" width="20.4" height="23" viewBox="0 0 20.4 23"><path d="M10.2 11.4 L20.2 16 L10.2 20.6 L0.2 16 Z" fill="#8fbab5"/><path d="M10.2 6.2 L20.2 10.8 L10.2 15.4 L0.2 10.8 Z" fill="#4a6068" stroke="#161824" stroke-width="0.8"/><path d="M10.2 0.4 L20.2 5.2 L10.2 10 L0.2 5.2 Z" fill="#8fbab5" stroke="#161824" stroke-width="0.8"/></svg>
<svg style="left:12.9px;top:279.5px;" width="17" height="22.5" viewBox="0 0 17 22.5"><rect x="0" y="3" width="17" height="19.4" rx="2" fill="#c48e58"/><path d="M5 3.4 V2.6 a3.5 3 0 0 1 7 0 V3.4" fill="none" stroke="#c48e58" stroke-width="1.4"/><rect x="4" y="2.6" width="9" height="3.2" rx="1" fill="#8a6238"/><path d="M3.4 10 L4.6 11.2 L6.6 8.8 M8.6 10.2 H13.6 M8.6 14.6 H13.6 M8.6 18.4 H13.6" fill="none" stroke="#3a2c1c" stroke-width="1.2"/><circle cx="4.8" cy="14.6" r="0.9" fill="#3a2c1c"/><circle cx="4.8" cy="18.4" r="0.9" fill="#3a2c1c"/></svg>
<svg style="left:15.4px;top:511px;" width="10.5" height="9.6" viewBox="0 0 10.5 9.6"><rect x="0" y="0" width="10.5" height="9.6" rx="1.6" fill="#b9bbc3"/><path d="M3.9 0 V3.4 H6.6 V0 Z" fill="#85878f"/></svg>
<svg style="left:9.2px;top:522.3px;" width="10.5" height="9.6" viewBox="0 0 10.5 9.6"><rect x="0" y="0" width="10.5" height="9.6" rx="1.6" fill="#b9bbc3"/><path d="M3.9 0 V3.4 H6.6 V0 Z" fill="#85878f"/></svg>
<svg style="left:21.8px;top:522.3px;" width="10.5" height="9.6" viewBox="0 0 10.5 9.6"><rect x="0" y="0" width="10.5" height="9.6" rx="1.6" fill="#b9bbc3"/><path d="M3.9 0 V3.4 H6.6 V0 Z" fill="#85878f"/></svg>
<svg style="left:12px;top:543.4px;" width="20.4" height="20" viewBox="0 0 20.4 20"><path d="M0 3.2 H3.6 a2 2 0 1 1 3.6 0 H10.4 V6.6 a2 2 0 1 0 0 3.6 V12 H7 a1.9 1.9 0 1 0 -3.6 0 H0 Z" fill="#a9abb4"/><path d="M11.6 1 H19.6 V9 H16.6 a1.9 1.9 0 1 0 -3.2 0 H11.6 V7 a2 2 0 1 1 0 -3.4 Z" fill="#4b4d59"/><path d="M0 13.2 H3 a2 2 0 1 1 3.8 0 H9.6 V20 H0 Z" fill="#4b4d59"/><path d="M10.8 10.6 H13 a2 2 0 1 1 3.8 0 H19.6 V20 H10.8 V17.4 a2 2 0 1 0 0 -3.6 Z" fill="#a9abb4"/></svg>
<svg style="left:11.8px;top:575px;" width="20" height="20" viewBox="0 0 20 20"><polygon points="17.23,8.44 19.91,8.67 19.91,11.33 17.23,11.56 16.22,14.01 17.95,16.07 16.07,17.95 14.01,16.22 11.56,17.23 11.33,19.91 8.67,19.91 8.44,17.23 5.99,16.22 3.93,17.95 2.05,16.07 3.78,14.01 2.77,11.56 0.09,11.33 0.09,8.67 2.77,8.44 3.78,5.99 2.05,3.93 3.93,2.05 5.99,3.78 8.44,2.77 8.67,0.09 11.33,0.09 11.56,2.77 14.01,3.78 16.07,2.05 17.95,3.93 16.22,5.99" fill="#b3b5bd" stroke="#b3b5bd" stroke-width="1" stroke-linejoin="round"/><circle cx="10" cy="10" r="4.800000000000001" fill="#b3b5bd"/><circle cx="10" cy="10" r="3.2" fill="#161824"/><circle cx="10" cy="10" r="1.5" fill="#7a7c86"/></svg>
<svg style="left:8.4px;top:606.8px;" width="24.4" height="24.4" viewBox="0 0 24.4 24.4"><circle cx="12.2" cy="12.2" r="12.2" fill="#d9d9de"/><path d="M6 8 L9 17" stroke="#59c7d8" stroke-width="3.4" stroke-linecap="round"/><path d="M9.6 7.4 L12 17.4" stroke="#c24bd8" stroke-width="3.6" stroke-linecap="round"/><path d="M13.6 9 L14.6 17" stroke="#f0508c" stroke-width="3.6" stroke-linecap="round"/><path d="M17.4 7.2 L15.6 16.6" stroke="#f59a4a" stroke-width="3.4" stroke-linecap="round"/></svg>
<div style="left:23px;top:605px;width:13.2px;height:8.6px;background:#c4524a;border-radius:4.3px;"></div>
<svg style="left:456.85px;top:90.6px;" width="8.8" height="8.8" viewBox="0 0 8.8 8.8"><path d="M4.4 0 V8.8 M0 4.4 H8.8" fill="none" stroke="#e4e5ea" stroke-width="1.2"/></svg>
<svg style="left:503.8px;top:91.8px;" width="6.4" height="6.4" viewBox="0 0 6.4 6.4"><path d="M0 0 L6.4 6.4 M6.4 0 L0 6.4" fill="none" stroke="#e4e5ea" stroke-width="1.2"/></svg>
<svg style="left:478.5px;top:89px;" width="11.5" height="12.5" viewBox="0 0 11.5 12.5"><path d="M3.4 2.6 V1.6 a1 1 0 0 1 1 -1 H8 L10.8 3.4 V8.8 a1 1 0 0 1 -1 1 H8.6" fill="none" stroke="#e4e5ea" stroke-width="1"/><rect x="0.6" y="2.6" width="7.6" height="9.3" rx="1.2" fill="none" stroke="#e4e5ea" stroke-width="1"/></svg>
<svg style="left:609px;top:88.9px;" width="12.2" height="12.2" viewBox="0 0 12.2 12.2"><circle cx="6.1" cy="6.1" r="5.5" fill="none" stroke="#d8d9de" stroke-width="1"/><path d="M2.3 2.3 L9.9 9.9" stroke="#d8d9de" stroke-width="1"/></svg>
<svg style="left:631.6px;top:90.3px;" width="12.8" height="9.4" viewBox="0 0 12.8 9.4"><path d="M3.8 0.5 H1.6 a1.1 1.1 0 0 0 -1.1 1.1 V7.8 a1.1 1.1 0 0 0 1.1 1.1 H3.8" fill="none" stroke="#d8d9de" stroke-width="1"/><path d="M3.8 3.2 H7.6 V0.8 L12.2 4.7 L7.6 8.6 V6.2 H3.8 Z" fill="none" stroke="#d8d9de" stroke-width="1" stroke-linejoin="round"/></svg>
<svg style="left:760.5px;top:88.7px;" width="14.8" height="12.4" viewBox="0 0 14.8 12.4"><path d="M4.6 1.8 H2 a1.4 1.4 0 0 0 -1.4 1.4 V10.4 a1.4 1.4 0 0 0 1.4 1.4 H9.4 a1.4 1.4 0 0 0 1.4 -1.4 V9.6" fill="none" stroke="#d8d9de" stroke-width="1"/><path d="M9.4 0.6 L14.2 4.6 L9.4 8.6 V6.4 C6.4 6.4 5 7.6 4.2 9.8 C3.6 5.8 5.8 3 9.4 2.8 Z" fill="none" stroke="#d8d9de" stroke-width="1" stroke-linejoin="round"/></svg>
<svg style="left:787.6px;top:94.25px;" width="7.6" height="1.5" viewBox="0 0 7.6 1.5"><circle cx="0.75" cy="0.75" r="0.75" fill="#e4e5ea"/><circle cx="3.8" cy="0.75" r="0.75" fill="#e4e5ea"/><circle cx="6.85" cy="0.75" r="0.75" fill="#e4e5ea"/></svg>
<div style="left:629.8px;top:104.5px;width:4.0px;height:1.1px;background:#7fb0a8;"></div>
<div style="left:636.8px;top:104.5px;width:3.8px;height:1.1px;background:#7fb0a8;"></div>
<svg style="left:620.9px;top:112.4px;" width="12.4" height="11.8" viewBox="0 0 12.4 11.8"><path d="M6.2 0.3 L12.1 2.7 V9 L6.2 11.5 L0.3 9 V2.7 Z" fill="#82b5ad"/><path d="M6.2 1.6 L10.2 3.2 L6.2 4.8 L2.2 3.2 Z" fill="#2e303c"/><path d="M7.4 6.2 L10.8 4.8 V8.2 L7.4 9.6 Z" fill="#2e303c"/></svg>
<svg style="left:620.9px;top:130px;" width="12.4" height="11.8" viewBox="0 0 12.4 11.8"><path d="M6.2 0.3 L12.1 2.7 V9 L6.2 11.5 L0.3 9 V2.7 Z" fill="#82b5ad"/><path d="M6.2 1.6 L10.2 3.2 L6.2 4.8 L2.2 3.2 Z" fill="#2e303c"/><path d="M7.4 6.2 L10.8 4.8 V8.2 L7.4 9.6 Z" fill="#2e303c"/></svg>
<svg style="left:668.85px;top:173.8px;" width="4.8" height="2.4" viewBox="0 0 4.8 2.4"><path d="M0 0 L2.4 2.4 L4.8 0" fill="none" stroke="#fff" stroke-width="1" stroke-linecap="round" stroke-linejoin="round"/></svg>
<svg style="left:661.1px;top:328.8px;" width="4.8" height="2.4" viewBox="0 0 4.8 2.4"><path d="M0 0 L2.4 2.4 L4.8 0" fill="none" stroke="#fff" stroke-width="1" stroke-linecap="round" stroke-linejoin="round"/></svg>
<svg style="left:583.1px;top:494.6px;" width="4.8" height="2.4" viewBox="0 0 4.8 2.4"><path d="M0 0 L2.4 2.4 L4.8 0" fill="none" stroke="#fff" stroke-width="1" stroke-linecap="round" stroke-linejoin="round"/></svg>
<svg style="left:715.6px;top:494.6px;" width="4.8" height="2.4" viewBox="0 0 4.8 2.4"><path d="M0 0 L2.4 2.4 L4.8 0" fill="none" stroke="#fff" stroke-width="1" stroke-linecap="round" stroke-linejoin="round"/></svg>
<svg style="left:700.75px;top:291.55px;" width="5.0" height="2.5" viewBox="0 0 5.0 2.5"><path d="M0 0 L2.5 2.5 L5.0 0" fill="none" stroke="#e4e5ea" stroke-width="1" stroke-linecap="round" stroke-linejoin="round"/></svg>
<svg style="left:704.5px;top:446.05px;" width="5.0" height="2.5" viewBox="0 0 5.0 2.5"><path d="M0 0 L2.5 2.5 L5.0 0" fill="none" stroke="#e4e5ea" stroke-width="1" stroke-linecap="round" stroke-linejoin="round"/></svg>
<svg style="left:567.5px;top:215.9px;" width="14.6" height="14.6" viewBox="0 0 14.6 14.6"><circle cx="7.3" cy="7.3" r="7.3" fill="#a1b36b"/><path d="M3.4 7.3 H10.6 M7.6 4 L10.9 7.3 L7.6 10.6" fill="none" stroke="#3e404c" stroke-width="1.7" stroke-linecap="round" stroke-linejoin="round"/></svg>
<svg style="left:579.9px;top:373.1px;" width="11.3" height="9.8" viewBox="0 0 11.3 9.8"><rect x="0" y="0" width="11.3" height="9.8" rx="1.3" fill="#8fc0ba"/><path d="M1.6 2.6 h3.4 v2 h-3.4z M6.3 2.6 h3.4 v2 h-3.4z M1.6 5.9 h3.4 v2 h-3.4z M6.3 5.9 h3.4 v2 h-3.4z" fill="#3e404c"/><circle cx="11.9" cy="-0.9" r="1.7" fill="none" stroke="#a9ad50" stroke-width="0.9"/><path d="M13.2 0.4 L15 2.2" stroke="#a9ad50" stroke-width="1" stroke-linecap="round"/></svg>
<svg style="left:658.7px;top:539.4px;" width="11.3" height="9.8" viewBox="0 0 11.3 9.8"><rect x="0" y="0" width="11.3" height="9.8" rx="1.3" fill="#8fc0ba"/><path d="M1.6 2.6 h3.4 v2 h-3.4z M6.3 2.6 h3.4 v2 h-3.4z M1.6 5.9 h3.4 v2 h-3.4z M6.3 5.9 h3.4 v2 h-3.4z" fill="#3e404c"/><path d="M12.6 -3.6 V0.6 M10.5 -1.5 H14.7" stroke="#a9ad50" stroke-width="1"/></svg>
<svg style="left:657.4px;top:601.6px;" width="11.3" height="9.8" viewBox="0 0 11.3 9.8"><rect x="0" y="0" width="11.3" height="9.8" rx="1.3" fill="#8fc0ba"/><path d="M1.6 2.6 h3.4 v2 h-3.4z M6.3 2.6 h3.4 v2 h-3.4z M1.6 5.9 h3.4 v2 h-3.4z M6.3 5.9 h3.4 v2 h-3.4z" fill="#3e404c"/><circle cx="11.9" cy="-0.9" r="1.7" fill="none" stroke="#a9ad50" stroke-width="0.9"/><path d="M13.2 0.4 L15 2.2" stroke="#a9ad50" stroke-width="1" stroke-linecap="round"/></svg>
<svg style="left:706.7px;top:374.6px;" width="9" height="7.6" viewBox="0 0 9 7.6"><path d="M3 0.6 H1.7 a1.1 1.1 0 0 0 -1.1 1.1 V5.9 a1.1 1.1 0 0 0 1.1 1.1 H3" fill="none" stroke="#e39a4c" stroke-width="1.2" stroke-linecap="round"/><path d="M3 2.6 H5.6 V0.6 L8.9 3.8 L5.6 7 V5 H3 Z" fill="#e39a4c"/></svg>
<svg style="left:741.4px;top:603px;" width="9" height="7.6" viewBox="0 0 9 7.6"><path d="M3 0.6 H1.7 a1.1 1.1 0 0 0 -1.1 1.1 V5.9 a1.1 1.1 0 0 0 1.1 1.1 H3" fill="none" stroke="#e39a4c" stroke-width="1.2" stroke-linecap="round"/><path d="M3 2.6 H5.6 V0.6 L8.9 3.8 L5.6 7 V5 H3 Z" fill="#e39a4c"/></svg>
<svg style="left:536.6px;top:531.2px;" width="6.6" height="14.6" viewBox="0 0 6.6 14.6"><circle cx="3.4" cy="1.9" r="1.9" fill="#b88aa8"/><path d="M0.6 5.4 H4.9 V12.4 H6.4 V14.5 H0.3 V12.4 H1.9 V7.5 H0.6 Z" fill="#b88aa8"/></svg>
<svg style="left:1005.8px;top:142.3px;" width="6.4" height="10.4" viewBox="0 0 6.4 10.4"><path d="M3.6 0 L0.3 5.8 H2.9 L2 10.4 L6.2 4.2 H3.5 L5.2 0 Z" fill="#a5b56b"/></svg>
<svg style="left:49.4px;top:647.3px;" width="13.6" height="12.4" viewBox="0 0 13.6 12.4"><path d="M1.2 5.2 A5.6 5.2 0 0 1 11.4 3.2 M12.4 7.2 A5.6 5.2 0 0 1 2.2 9.2" fill="none" stroke="#e4e5ea" stroke-width="1.1" stroke-linecap="round"/><path d="M11.8 0.4 V3.6 H8.6 M1.8 12 V8.8 H5" fill="none" stroke="#e4e5ea" stroke-width="1.1" stroke-linecap="round" stroke-linejoin="round"/></svg>
<svg style="left:164.9px;top:652px;" width="5.4" height="3.2" viewBox="0 0 5.4 3.2"><path d="M0 0 H5.4 L2.7 3.2 Z" fill="#c9cad0"/></svg>
<div style="left:175.2px;top:648.4px;width:10.0px;height:10.0px;background:#a4d95a;border-radius:5px;"></div>
<svg style="left:196.6px;top:647.3px;" width="11" height="12.2" viewBox="0 0 11 12.2"><path d="M0.8 0.9 L10.2 6.1 L0.8 11.3 Z" fill="none" stroke="#5b97ee" stroke-width="1.1" stroke-linejoin="round"/></svg>
<svg style="left:219px;top:647.3px;" width="13" height="12.4" viewBox="0 0 13 12.4"><path d="M11.4 6.4 A5.3 5.3 0 1 1 9.4 2.2" fill="none" stroke="#e4e5ea" stroke-width="1.1" stroke-linecap="round"/><path d="M11.6 0.4 V4 H8" fill="none" stroke="#e4e5ea" stroke-width="1.1" stroke-linecap="round" stroke-linejoin="round"/></svg>
<svg style="left:241.8px;top:646.8px;" width="16" height="13" viewBox="0 0 16 13"><path d="M1 12 L8 5 L9.8 6.8 L2.8 13.8 Z" transform="translate(0,-1.2)" fill="none" stroke="#e4e5ea" stroke-width="1" stroke-linejoin="round"/><path d="M7.2 3.2 L9.6 0.8 C11.4 1 13.2 2.4 14.8 4.6 L12.2 7.2 C11.6 6.2 10.8 6.2 10.2 6.6 Z" fill="none" stroke="#e4e5ea" stroke-width="1" stroke-linejoin="round"/></svg>
<svg style="left:268.2px;top:647.5px;" width="12" height="12" viewBox="0 0 12 12"><circle cx="6" cy="6" r="5.4" fill="none" stroke="#e4e5ea" stroke-width="1"/><path d="M3.4 6.2 L5.3 8 L8.7 4.2" fill="none" stroke="#e4e5ea" stroke-width="1" stroke-linecap="round" stroke-linejoin="round"/></svg>
<svg style="left:589.8px;top:647.8px;" width="11" height="11.2" viewBox="0 0 11 11.2"><path d="M5.5 0.8 V11 M0.8 5.4 L5.5 0.7 L10.2 5.4" fill="none" stroke="#e4e5ea" stroke-width="1.1" stroke-linecap="round" stroke-linejoin="round"/></svg>
<svg style="left:657.6px;top:648px;" width="10.8" height="11" viewBox="0 0 10.8 11"><path d="M0 0.6 H10.8 M0 5.5 H10.8 M0 10.4 H10.8" stroke="#e4e5ea" stroke-width="1.1"/></svg>
<svg style="left:711.1px;top:647.6px;" width="15.4" height="11.6" viewBox="0 0 15.4 11.6"><path d="M0.8 0.8 L6.2 5.8 L0.8 10.8 M7.6 11 H15.2" fill="none" stroke="#5b97ee" stroke-width="1.1" stroke-linecap="round" stroke-linejoin="round"/></svg>
<svg style="left:813.9px;top:652px;" width="5.4" height="3.2" viewBox="0 0 5.4 3.2"><path d="M0 0 H5.4 L2.7 3.2 Z" fill="#c9cad0"/></svg>
<svg style="left:832.2px;top:650.1px;" width="6.8" height="6.8" viewBox="0 0 6.8 6.8"><path d="M0 0 L6.8 6.8 M6.8 0 L0 6.8" fill="none" stroke="#e4e5ea" stroke-width="1.1"/></svg>
<svg style="left:859px;top:648.6px;" width="11.4" height="9.6" viewBox="0 0 11.4 9.6"><path d="M0.6 5.8 L3.8 9 L10.8 0.6" fill="none" stroke="#e4e5ea" stroke-width="1.1" stroke-linecap="round" stroke-linejoin="round"/></svg>
<svg style="left:951.5px;top:657.6px;" width="10.5" height="3" viewBox="0 0 10.5 3"><path d="M0 2.4 H10.5" stroke="#e4e5ea" stroke-width="1"/></svg>
<svg style="left:974px;top:656.8px;" width="11" height="4" viewBox="0 0 11 4"><path d="M0 3.4 L3 0.6 L5.5 3.4 L8 0.6 L11 3.4" fill="none" stroke="#e4e5ea" stroke-width="1"/></svg>
<div style="left:907.8px;top:584.5px;width:108.4px;height:72.6px;background:#fff;border-radius:3.5px;z-index:5;box-shadow:0 1px 12px 2px rgba(0,0,0,0.38);"></div>
<svg style="left:911px;top:587.9px;z-index:6;" width="102" height="66" viewBox="0 0 102 66"><rect x="0" y="0" width="102" height="66" fill="#161824"/><rect x="0" y="0" width="102" height="1.2" fill="#000"/><rect x="0" y="1.2" width="102" height="1.9" fill="#2e303c"/><rect x="4.2" y="6.4" width="97.8" height="1.7" fill="#3a3c48"/><rect x="4.2" y="8.1" width="97.8" height="2.1" fill="#2c2e3a"/><rect x="4.2" y="10.2" width="23.7" height="55.8" fill="#161824"/><rect x="29.4" y="3.9" width="1.3" height="1.3" fill="#a5b56b"/><rect x="37.7" y="3.9" width="1.3" height="1.3" fill="#a5b56b"/><rect x="46.6" y="3.9" width="1.3" height="1.3" fill="#a5b56b"/><rect x="55.6" y="3.9" width="1.3" height="1.3" fill="#a5b56b"/><rect x="64.5" y="3.9" width="1.3" height="1.3" fill="#a5b56b"/><rect x="74.8" y="3.9" width="1.3" height="1.3" fill="#a5b56b"/><rect x="81" y="3.9" width="1.3" height="1.3" fill="#a5b56b"/><rect x="63.6" y="3.2" width="9.4" height="2.4" fill="#2e303c"/><rect x="31.5" y="4.3" width="4.5" height="0.6" fill="#7c7e8a"/><rect x="40.5" y="4.3" width="4.5" height="0.6" fill="#7c7e8a"/><rect x="49.5" y="4.3" width="4.5" height="0.6" fill="#7c7e8a"/><rect x="58.5" y="4.3" width="4.5" height="0.6" fill="#7c7e8a"/><rect x="67.0" y="4.3" width="4.5" height="0.6" fill="#cfd0d6"/><rect x="78.5" y="4.3" width="4.5" height="0.6" fill="#7c7e8a"/><rect x="73" y="2.0" width="19" height="0.6" fill="#4f82d6"/><rect x="30" y="2.0" width="12" height="0.6" fill="#7c7e8a"/><rect x="4.2" y="11.9" width="23.6" height="1.9" fill="#5b97ee"/><rect x="7" y="12.5" width="5" height="0.6" fill="#fff"/><rect x="5.4" y="10.9" width="7.6" height="0.5" fill="#8a9560"/><rect x="4.2" y="25" width="23.6" height="2.3" fill="#2e303c"/><rect x="5.4" y="7" width="6.6" height="0.6" fill="#9496a2"/><rect x="15" y="7" width="11.5" height="0.6" fill="#8a8c96"/><rect x="28.2" y="8.8" width="4.8" height="0.6" fill="#9496a2"/><rect x="82.6" y="8.8" width="5.4" height="0.6" fill="#9496a2"/><rect x="22.3" y="25.7" width="1.2" height="1.0" fill="#b4b6c0"/><rect x="24.2" y="25.7" width="1.2" height="1.0" fill="#5b97ee"/><rect x="26" y="25.7" width="1.2" height="1.0" fill="#b4b6c0"/><rect x="28.1" y="17" width="15.7" height="2.2" fill="#5b97ee"/><rect x="30" y="11.1" width="1.2" height="1.1" fill="#e8a45c"/><rect x="32" y="11.299999999999999" width="5" height="0.6" fill="#6e707c"/><rect x="41.8" y="11.1" width="1.8" height="1.1" fill="#5c5e6a" rx="0.5"/><rect x="30" y="13.25" width="1.2" height="1.1" fill="#8ec5bd"/><rect x="32" y="13.45" width="6" height="0.6" fill="#6e707c"/><rect x="41.8" y="13.25" width="1.8" height="1.1" fill="#5c5e6a" rx="0.5"/><rect x="30" y="15.399999999999999" width="1.2" height="1.1" fill="#8ec5bd"/><rect x="32" y="15.599999999999998" width="3.5" height="0.6" fill="#6e707c"/><rect x="41.8" y="15.399999999999999" width="1.8" height="1.1" fill="#5c5e6a" rx="0.5"/><rect x="30" y="17.549999999999997" width="1.2" height="1.1" fill="#fff"/><rect x="32" y="17.749999999999996" width="7.5" height="0.6" fill="#fff"/><rect x="41.8" y="17.549999999999997" width="1.8" height="1.1" fill="#5c5e6a" rx="0.5"/><rect x="30" y="19.7" width="1.2" height="1.1" fill="#e8a45c"/><rect x="32" y="19.9" width="9" height="0.6" fill="#6e707c"/><rect x="41.8" y="19.7" width="1.8" height="1.1" fill="#5c5e6a" rx="0.5"/><rect x="30" y="21.85" width="1.2" height="1.1" fill="#c0604a"/><rect x="32" y="22.05" width="6" height="0.6" fill="#6e707c"/><rect x="41.8" y="21.85" width="1.8" height="1.1" fill="#5c5e6a" rx="0.5"/><rect x="30" y="24.0" width="1.2" height="1.1" fill="#a5dccf"/><rect x="32" y="24.2" width="7" height="0.6" fill="#6e707c"/><rect x="41.8" y="24.0" width="1.8" height="1.1" fill="#5c5e6a" rx="0.5"/><rect x="30" y="26.15" width="1.2" height="1.1" fill="#8fbdd3"/><rect x="32" y="26.349999999999998" width="7" height="0.6" fill="#6e707c"/><rect x="41.8" y="26.15" width="1.8" height="1.1" fill="#5c5e6a" rx="0.5"/><rect x="30" y="28.299999999999997" width="1.2" height="1.1" fill="#f5cf8c"/><rect x="32" y="28.499999999999996" width="6.8" height="0.6" fill="#6e707c"/><rect x="41.8" y="28.299999999999997" width="1.8" height="1.1" fill="#5c5e6a" rx="0.5"/><rect x="30" y="30.449999999999996" width="1.2" height="1.1" fill="#c0604a"/><rect x="32" y="30.649999999999995" width="3.4" height="0.6" fill="#6e707c"/><rect x="41.8" y="30.449999999999996" width="1.8" height="1.1" fill="#5c5e6a" rx="0.5"/><rect x="28.1" y="32" width="16.3" height="2.1" fill="#2e303c"/><rect x="37.8" y="32.5" width="1.2" height="1.1" fill="#b4b6c0"/><rect x="40" y="32.5" width="1.2" height="1.1" fill="#5b97ee"/><rect x="42.2" y="32.5" width="1.2" height="1.1" fill="#b4b6c0"/><rect x="30" y="36.0" width="2.9" height="0.5" fill="#f8cf8e"/><rect x="30" y="37.0" width="2.9" height="0.5" fill="#7d6a55"/><rect x="30" y="38.0" width="2.9" height="0.5" fill="#f8cf8e"/><rect x="32.6" y="35.0" width="1.6" height="1.2" fill="#a6b86e"/><rect x="29.6" y="39.6" width="3.8" height="0.5" fill="#6e707c"/><rect x="30" y="40.6" width="3" height="0.5" fill="#6e707c"/><rect x="35.8" y="36.0" width="2.9" height="0.5" fill="#f8cf8e"/><rect x="35.8" y="37.0" width="2.9" height="0.5" fill="#7d6a55"/><rect x="35.8" y="38.0" width="2.9" height="0.5" fill="#f8cf8e"/><rect x="38.4" y="35.0" width="1.6" height="1.2" fill="#a6b86e"/><rect x="35.4" y="39.6" width="3.8" height="0.5" fill="#6e707c"/><rect x="35.8" y="40.6" width="3.0" height="0.5" fill="#6e707c"/><rect x="30" y="43.0" width="2.9" height="0.5" fill="#f8cf8e"/><rect x="30" y="44.0" width="2.9" height="0.5" fill="#7d6a55"/><rect x="30" y="45.0" width="2.9" height="0.5" fill="#f8cf8e"/><rect x="32.6" y="42.0" width="1.6" height="1.2" fill="#a6b86e"/><rect x="29.6" y="46.6" width="3.8" height="0.5" fill="#6e707c"/><rect x="30" y="47.6" width="3" height="0.5" fill="#6e707c"/><rect x="35.8" y="43.0" width="2.9" height="0.5" fill="#f8cf8e"/><rect x="35.8" y="44.0" width="2.9" height="0.5" fill="#7d6a55"/><rect x="35.8" y="45.0" width="2.9" height="0.5" fill="#f8cf8e"/><rect x="38.4" y="42.0" width="1.6" height="1.2" fill="#a6b86e"/><rect x="35.4" y="46.6" width="3.8" height="0.5" fill="#6e707c"/><rect x="35.8" y="47.6" width="3.0" height="0.5" fill="#6e707c"/><rect x="30" y="50.0" width="2.9" height="0.5" fill="#f8cf8e"/><rect x="30" y="51.0" width="2.9" height="0.5" fill="#7d6a55"/><rect x="30" y="52.0" width="2.9" height="0.5" fill="#f8cf8e"/><rect x="32.6" y="49.0" width="1.6" height="1.2" fill="#a6b86e"/><rect x="29.6" y="53.6" width="3.8" height="0.5" fill="#6e707c"/><rect x="30" y="54.6" width="3" height="0.5" fill="#6e707c"/><rect x="35.8" y="50.0" width="2.9" height="0.5" fill="#f8cf8e"/><rect x="35.8" y="51.0" width="2.9" height="0.5" fill="#7d6a55"/><rect x="35.8" y="52.0" width="2.9" height="0.5" fill="#f8cf8e"/><rect x="38.4" y="49.0" width="1.6" height="1.2" fill="#a6b86e"/><rect x="35.4" y="53.6" width="3.8" height="0.5" fill="#6e707c"/><rect x="35.8" y="54.6" width="3.0" height="0.5" fill="#6e707c"/><rect x="30" y="57.0" width="2.9" height="0.5" fill="#f8cf8e"/><rect x="30" y="58.0" width="2.9" height="0.5" fill="#7d6a55"/><rect x="30" y="59.0" width="2.9" height="0.5" fill="#f8cf8e"/><rect x="32.6" y="56.0" width="1.6" height="1.2" fill="#a6b86e"/><rect x="29.6" y="60.6" width="3.8" height="0.5" fill="#6e707c"/><rect x="30" y="61.6" width="3" height="0.5" fill="#6e707c"/><rect x="35.8" y="57.0" width="2.9" height="0.5" fill="#f8cf8e"/><rect x="35.8" y="58.0" width="2.9" height="0.5" fill="#7d6a55"/><rect x="35.8" y="59.0" width="2.9" height="0.5" fill="#f8cf8e"/><rect x="38.4" y="56.0" width="1.6" height="1.2" fill="#b5534a"/><rect x="35.4" y="60.6" width="3.8" height="0.5" fill="#6e707c"/><rect x="35.8" y="61.6" width="3.0" height="0.5" fill="#6e707c"/><rect x="27.9" y="3.2" width="0.25" height="61.1" fill="#3a3c48"/><rect x="44.4" y="6.4" width="0.25" height="57.9" fill="#3a3c48"/><rect x="81.1" y="6.4" width="0.25" height="57.9" fill="#3a3c48"/><rect x="3.9" y="3.2" width="0.25" height="62.8" fill="#3a3c48"/><rect x="64.6" y="15.3" width="0.25" height="35.7" fill="#4b4d59"/><rect x="58.1" y="10.2" width="12.8" height="5.1" fill="#3a3c48" rx="1"/><rect x="62.4" y="12" width="4.6" height="0.5" fill="#6e707c"/><rect x="62.4" y="13.6" width="5.6" height="0.5" fill="#6e707c"/><rect x="62" y="16.5" width="5.4" height="1.2" fill="#55576a" rx="0.6"/><rect x="55" y="19.3" width="19.5" height="5.4" fill="#3e404c" rx="0.8" stroke="#6fb0d8" stroke-width="0.55"/><rect x="56.4" y="20.4" width="16.8" height="3.2" fill="none" rx="0.4" stroke="#8aa0a8" stroke-width="0.25" stroke-dasharray="0.5 0.4"/><rect x="57.4" y="21.5" width="1.0" height="1.0" fill="#a1b36b" rx="0.5"/><rect x="59.6" y="21" width="4.4" height="0.5" fill="#b4b6c0"/><rect x="59.6" y="22.4" width="11.4" height="0.5" fill="#6e707c"/><rect x="57.9" y="26.6" width="13.3" height="4.4" fill="#3e404c" rx="2.2" stroke="#c98e50" stroke-width="0.35"/><rect x="60" y="28.4" width="1" height="1.0" fill="#e39a4c"/><rect x="62" y="28" width="4.4" height="0.5" fill="#b4b6c0"/><rect x="62" y="29.4" width="7" height="0.5" fill="#6e707c"/><rect x="62.6" y="32.2" width="4.2" height="1.1" fill="#55576a" rx="0.5"/><rect x="56" y="35.1" width="17.2" height="4.9" fill="#3e404c" rx="0.7" stroke="#7a9c9a" stroke-width="0.3"/><rect x="57.6" y="37" width="1.2" height="1" fill="#8fc0ba"/><rect x="59.8" y="36.6" width="9.2" height="0.5" fill="#b4b6c0"/><rect x="59.8" y="38" width="6.2" height="0.5" fill="#6e707c"/><rect x="70.6" y="37.2" width="0.9" height="0.8" fill="#e39a4c"/><rect x="57.9" y="41.9" width="13.7" height="4.7" fill="#3e404c" rx="2.3" stroke="#c98e50" stroke-width="0.35"/><rect x="59.8" y="43.8" width="1.0" height="1.0" fill="#e39a4c"/><rect x="61.8" y="43.4" width="4.2" height="0.5" fill="#b4b6c0"/><rect x="61.8" y="44.8" width="7.6" height="0.5" fill="#6e707c"/><rect x="56.7" y="47.8" width="13.6" height="0.25" fill="#4b4d59"/><rect x="56.7" y="47.8" width="0.25" height="16.5" fill="#4b4d59"/><rect x="70.1" y="47.8" width="0.25" height="16.5" fill="#4b4d59"/><rect x="54.6" y="48.9" width="4.4" height="1.1" fill="#55576a" rx="0.5"/><rect x="68" y="48.9" width="4.2" height="1.1" fill="#55576a" rx="0.5"/><rect x="51.8" y="51.9" width="10.2" height="3.4" fill="#474956"/><rect x="55.4" y="53.4" width="3.6" height="0.5" fill="#9496a2"/><rect x="53.4" y="53" width="0.6" height="1.3" fill="#b88aa8"/><rect x="63.9" y="51.9" width="12.8" height="4.1" fill="#3e404c" rx="0.7" stroke="#7a9c9a" stroke-width="0.3"/><rect x="65.4" y="53.6" width="1.2" height="1.0" fill="#8fc0ba"/><rect x="67.6" y="53.2" width="6.8" height="0.5" fill="#b4b6c0"/><rect x="67.6" y="54.6" width="2.4" height="0.5" fill="#6e707c"/><rect x="63.9" y="58.1" width="12.8" height="4.3" fill="#3e404c" rx="0.7" stroke="#7a9c9a" stroke-width="0.3"/><rect x="65.4" y="59.8" width="1.2" height="1.0" fill="#8fc0ba"/><rect x="67.6" y="59.4" width="5.4" height="0.5" fill="#b4b6c0"/><rect x="67.6" y="60.8" width="5.0" height="0.5" fill="#6e707c"/><rect x="74.3" y="60" width="0.9" height="0.8" fill="#e39a4c"/><path d="M46.4 26.5 H81 M46.4 26.5 V64.3" stroke="#3d64a6" stroke-width="0.2" stroke-dasharray="0.4 0.3" fill="none"/><path d="M49.6 42 H80.2 V64.3 M49.6 42 V64.3" stroke="#44465a" stroke-width="0.2" stroke-dasharray="0.4 0.3" fill="none"/><rect x="83.4" y="12.6" width="11.6" height="0.5" fill="#9496a2"/><rect x="85.4" y="14.6" width="4.0" height="0.5" fill="#5b97ee"/><rect x="83.4" y="16.4" width="4.6" height="0.5" fill="#6e707c"/><rect x="87.5" y="18" width="8.7" height="1.6" fill="#a9c25e" rx="0.3"/><rect x="84.6" y="18.5" width="2.2" height="0.5" fill="#6e707c"/><rect x="99" y="18.2" width="3" height="1.0" fill="#7a8a4a" rx="0.3"/><rect x="84" y="20.8" width="3" height="0.5" fill="#6e707c"/><rect x="88.4" y="20.6" width="1.0" height="1.0" fill="#5c5e6a"/><rect x="88.4" y="22.6" width="0.8" height="0.8" fill="#5c5e6a"/><rect x="90" y="22.8" width="2.4" height="0.5" fill="#6e707c"/><rect x="1.3" y="5.1000000000000005" width="1.6" height="1.6" fill="#6f8fa6" rx="0.3" opacity="0.8"/><rect x="1.3" y="8.299999999999999" width="1.6" height="1.6" fill="#e0aa6a" rx="0.3" opacity="0.8"/><rect x="1.3" y="11.7" width="1.6" height="1.6" fill="#a3aa62" rx="0.3" opacity="0.8"/><rect x="1.3" y="14.899999999999999" width="1.6" height="1.6" fill="#7fa9a4" rx="0.3" opacity="0.8"/><rect x="1.3" y="18.099999999999998" width="1.6" height="1.6" fill="#c48e58" rx="0.3" opacity="0.8"/><rect x="1.3" y="21.3" width="1.6" height="1.6" fill="#a07fa6" rx="0.3" opacity="0.8"/><rect x="1.3" y="24.8" width="1.6" height="1.6" fill="#8fbab5" rx="0.3" opacity="0.8"/><rect x="1.3" y="28.099999999999998" width="1.6" height="1.6" fill="#c48e58" rx="0.3" opacity="0.8"/><rect x="1.3" y="50.7" width="1.6" height="1.6" fill="#9496a2" rx="0.3" opacity="0.8"/><rect x="1.3" y="54.2" width="1.6" height="1.6" fill="#8a8c96" rx="0.3" opacity="0.8"/><rect x="1.3" y="57.400000000000006" width="1.6" height="1.6" fill="#9496a2" rx="0.3" opacity="0.8"/><circle cx="2.05" cy="61.5" r="1.2" fill="#e4c0d8"/><rect x="0" y="4.6" width="0.3" height="3.4" fill="#5b97ee"/><rect x="4.2" y="64.3" width="97.8" height="1.7" fill="#2e303c"/><rect x="7.4" y="64.9" width="8.6" height="0.5" fill="#9496a2"/><rect x="17.6" y="64.9" width="0.9" height="0.5" fill="#a4d95a"/><rect x="19.6" y="64.9" width="1.0" height="0.5" fill="#5b97ee"/><rect x="21.8" y="64.9" width="5.6" height="0.5" fill="#7c7e8a"/><rect x="58.8" y="64.9" width="4.6" height="0.5" fill="#9496a2"/><rect x="65.6" y="64.9" width="4.4" height="0.5" fill="#9496a2"/><rect x="71" y="64.9" width="9" height="0.5" fill="#5b97ee"/><rect x="85.6" y="64.9" width="4.8" height="0.5" fill="#9496a2"/><rect x="92.6" y="64.9" width="7.2" height="0.5" fill="#7c7e8a"/></svg>
<span style="left:293.75px;top:27.75px;font-size:9.2px;color:#e4e5ea;letter-spacing:0.074px;">Wappler - saasactingpartner</span>
<span style="left:752.5px;top:27.75px;font-size:9.2px;color:#5b97ee;letter-spacing:0.004px;">Install Update 6.3.2</span>
<span style="left:851px;top:27.75px;font-size:9.2px;color:#5b97ee;letter-spacing:-0.070px;">Install 1 Extension Update</span>
<span style="left:313.25px;top:48.25px;font-size:9.2px;color:#e4e5ea;letter-spacing:-0.103px;">main.ejs</span>
<span style="left:398px;top:48.25px;font-size:9.2px;color:#e4e5ea;letter-spacing:-0.064px;">index.ejs</span>
<span style="left:485.5px;top:48.25px;font-size:9.2px;color:#e4e5ea;">login.ejs</span>
<span style="left:571.5px;top:48.25px;font-size:9.2px;color:#e4e5ea;letter-spacing:0.105px;">logout.json</span>
<span style="left:669px;top:48.25px;font-size:9.2px;color:#e4e5ea;letter-spacing:0.056px;">global.json</span>
<span style="left:763.25px;top:48.25px;font-size:9.2px;color:#e4e5ea;letter-spacing:-0.039px;">seo</span>
<span style="left:829.25px;top:48.25px;font-size:9.2px;color:#e4e5ea;letter-spacing:0.051px;">register.ejs</span>
<span style="left:47.25px;top:66.50px;font-size:9.8px;color:#e4e5ea;">Project Folder</span>
<span style="left:143.25px;top:66.50px;font-size:9.0px;color:#e4e5ea;letter-spacing:-0.195px;">Pages</span>
<span style="left:177.5px;top:66.50px;font-size:9.0px;color:#5b97ee;letter-spacing:0.097px;">Assets</span>
<span style="left:214.5px;top:66.50px;font-size:9.0px;color:#e4e5ea;letter-spacing:-0.066px;">Files</span>
<span style="left:242.5px;top:66.50px;font-size:9.0px;color:#e4e5ea;letter-spacing:-0.006px;">Search</span>
<span style="left:76.75px;top:107.75px;font-size:9.1px;color:#a9b97c;font-family:"DejaVu Sans Condensed","DejaVu Sans","Liberation Sans",sans-serif;-webkit-text-stroke:0.1px currentColor;transform:none;">Assets (/assets)</span>
<span style="left:268.6px;top:107.75px;font-size:8.4px;color:#d0d2d8;font-family:"DejaVu Sans Condensed","DejaVu Sans","Liberation Sans",sans-serif;-webkit-text-stroke:0.1px currentColor;transform:none;">0</span>
<span style="left:84.5px;top:125.25px;font-size:9.07px;color:#fff;font-family:"DejaVu Sans Condensed","DejaVu Sans","Liberation Sans",sans-serif;-webkit-text-stroke:0.1px currentColor;transform:none;">images</span>
<span style="left:268.6px;top:125.25px;font-size:8.4px;color:#fff;font-family:"DejaVu Sans Condensed","DejaVu Sans","Liberation Sans",sans-serif;-webkit-text-stroke:0.1px currentColor;transform:none;">0</span>
<span style="left:98.75px;top:257.50px;font-size:10.1px;color:#7e818d;">Search</span>
<span style="left:451.25px;top:68.25px;font-size:9.58px;color:#9a9da8;">Steps</span>
<span style="left:287.5px;top:88.75px;font-size:9.76px;color:#e4e5ea;">Actions</span>
<span style="left:810.5px;top:88.50px;font-size:9.88px;color:#e4e5ea;">Properties</span>
<span style="left:319.75px;top:110.60px;font-size:9.04px;color:#e4e5ea;font-family:"DejaVu Sans Condensed","DejaVu Sans","Liberation Sans",sans-serif;-webkit-text-stroke:0.1px currentColor;transform:none;">Core Actions</span>
<span style="left:422.5px;top:110.70px;font-size:8.4px;color:#e4e5ea;font-family:"DejaVu Sans Condensed","DejaVu Sans","Liberation Sans",sans-serif;-webkit-text-stroke:0.1px currentColor;transform:none;">17</span>
<span style="left:319.75px;top:132.28px;font-size:8.92px;color:#e4e5ea;font-family:"DejaVu Sans Condensed","DejaVu Sans","Liberation Sans",sans-serif;-webkit-text-stroke:0.1px currentColor;transform:none;">API Connector</span>
<span style="left:427.3px;top:132.38px;font-size:8.4px;color:#e4e5ea;font-family:"DejaVu Sans Condensed","DejaVu Sans","Liberation Sans",sans-serif;-webkit-text-stroke:0.1px currentColor;transform:none;">1</span>
<span style="left:319.75px;top:153.96px;font-size:8.84px;color:#e4e5ea;font-family:"DejaVu Sans Condensed","DejaVu Sans","Liberation Sans",sans-serif;-webkit-text-stroke:0.1px currentColor;transform:none;">Validator</span>
<span style="left:427.3px;top:154.06px;font-size:8.4px;color:#e4e5ea;font-family:"DejaVu Sans Condensed","DejaVu Sans","Liberation Sans",sans-serif;-webkit-text-stroke:0.1px currentColor;transform:none;">1</span>
<span style="left:319.75px;top:175.64px;font-size:9.06px;color:#fff;font-family:"DejaVu Sans Condensed","DejaVu Sans","Liberation Sans",sans-serif;-webkit-text-stroke:0.1px currentColor;transform:none;">Data Management</span>
<span style="left:422.5px;top:175.74px;font-size:8.4px;color:#fff;font-family:"DejaVu Sans Condensed","DejaVu Sans","Liberation Sans",sans-serif;-webkit-text-stroke:0.1px currentColor;transform:none;">18</span>
<span style="left:319.75px;top:197.32px;font-size:9.16px;color:#e4e5ea;font-family:"DejaVu Sans Condensed","DejaVu Sans","Liberation Sans",sans-serif;-webkit-text-stroke:0.1px currentColor;transform:none;">Data Transformations</span>
<span style="left:427.3px;top:197.42px;font-size:8.4px;color:#e4e5ea;font-family:"DejaVu Sans Condensed","DejaVu Sans","Liberation Sans",sans-serif;-webkit-text-stroke:0.1px currentColor;transform:none;">4</span>
<span style="left:319.75px;top:219.00px;font-size:9.2px;color:#e4e5ea;font-family:"DejaVu Sans Condensed","DejaVu Sans","Liberation Sans",sans-serif;-webkit-text-stroke:0.1px currentColor;transform:none;">Cryptographic</span>
<span style="left:427.3px;top:219.10px;font-size:8.4px;color:#e4e5ea;font-family:"DejaVu Sans Condensed","DejaVu Sans","Liberation Sans",sans-serif;-webkit-text-stroke:0.1px currentColor;transform:none;">3</span>
<span style="left:319.75px;top:240.68px;font-size:9.06px;color:#e4e5ea;font-family:"DejaVu Sans Condensed","DejaVu Sans","Liberation Sans",sans-serif;-webkit-text-stroke:0.1px currentColor;transform:none;">Database Actions</span>
<span style="left:422.5px;top:240.78px;font-size:8.4px;color:#e4e5ea;font-family:"DejaVu Sans Condensed","DejaVu Sans","Liberation Sans",sans-serif;-webkit-text-stroke:0.1px currentColor;transform:none;">11</span>
<span style="left:319.75px;top:262.36px;font-size:9.0px;color:#e4e5ea;font-family:"DejaVu Sans Condensed","DejaVu Sans","Liberation Sans",sans-serif;-webkit-text-stroke:0.1px currentColor;transform:none;">File Management</span>
<span style="left:422.5px;top:262.46px;font-size:8.4px;color:#e4e5ea;font-family:"DejaVu Sans Condensed","DejaVu Sans","Liberation Sans",sans-serif;-webkit-text-stroke:0.1px currentColor;transform:none;">15</span>
<span style="left:319.75px;top:284.04px;font-size:9.0px;color:#e4e5ea;font-family:"DejaVu Sans Condensed","DejaVu Sans","Liberation Sans",sans-serif;-webkit-text-stroke:0.1px currentColor;transform:none;">Image Processor</span>
<span style="left:422.5px;top:284.14px;font-size:8.4px;color:#e4e5ea;font-family:"DejaVu Sans Condensed","DejaVu Sans","Liberation Sans",sans-serif;-webkit-text-stroke:0.1px currentColor;transform:none;">21</span>
<span style="left:319.75px;top:305.72px;font-size:9.14px;color:#e4e5ea;font-family:"DejaVu Sans Condensed","DejaVu Sans","Liberation Sans",sans-serif;-webkit-text-stroke:0.1px currentColor;transform:none;">Security</span>
<span style="left:427.3px;top:305.82px;font-size:8.4px;color:#e4e5ea;font-family:"DejaVu Sans Condensed","DejaVu Sans","Liberation Sans",sans-serif;-webkit-text-stroke:0.1px currentColor;transform:none;">3</span>
<span style="left:293.5px;top:325.00px;font-size:10.26px;color:#7e818d;">Search</span>
<span style="left:275px;top:390.00px;font-size:8.4px;color:#e4e5ea;width:80px;text-align:center;font-family:"DejaVu Sans Condensed","DejaVu Sans","Liberation Sans",sans-serif;-webkit-text-stroke:0.1px currentColor;transform:none;">Create</span>
<span style="left:275px;top:399.30px;font-size:8.4px;color:#e4e5ea;width:80px;text-align:center;font-family:"DejaVu Sans Condensed","DejaVu Sans","Liberation Sans",sans-serif;-webkit-text-stroke:0.1px currentColor;transform:none;">Array List</span>
<span style="left:331.5px;top:390.00px;font-size:8.4px;color:#e4e5ea;width:80px;text-align:center;font-family:"DejaVu Sans Condensed","DejaVu Sans","Liberation Sans",sans-serif;-webkit-text-stroke:0.1px currentColor;transform:none;">Get Array</span>
<span style="left:331.5px;top:399.30px;font-size:8.4px;color:#e4e5ea;width:80px;text-align:center;font-family:"DejaVu Sans Condensed","DejaVu Sans","Liberation Sans",sans-serif;-webkit-text-stroke:0.1px currentColor;transform:none;">List Value</span>
<span style="left:275px;top:460.30px;font-size:8.4px;color:#e4e5ea;width:80px;text-align:center;font-family:"DejaVu Sans Condensed","DejaVu Sans","Liberation Sans",sans-serif;-webkit-text-stroke:0.1px currentColor;transform:none;">Array List</span>
<span style="left:275px;top:469.60px;font-size:8.4px;color:#e4e5ea;width:80px;text-align:center;font-family:"DejaVu Sans Condensed","DejaVu Sans","Liberation Sans",sans-serif;-webkit-text-stroke:0.1px currentColor;transform:none;">Size</span>
<span style="left:331.5px;top:460.30px;font-size:8.4px;color:#e4e5ea;width:80px;text-align:center;font-family:"DejaVu Sans Condensed","DejaVu Sans","Liberation Sans",sans-serif;-webkit-text-stroke:0.1px currentColor;transform:none;">Get Array</span>
<span style="left:331.5px;top:469.60px;font-size:8.4px;color:#e4e5ea;width:80px;text-align:center;font-family:"DejaVu Sans Condensed","DejaVu Sans","Liberation Sans",sans-serif;-webkit-text-stroke:0.1px currentColor;transform:none;">List Index</span>
<span style="left:275px;top:530.60px;font-size:8.4px;color:#e4e5ea;width:80px;text-align:center;font-family:"DejaVu Sans Condensed","DejaVu Sans","Liberation Sans",sans-serif;-webkit-text-stroke:0.1px currentColor;transform:none;">Add in</span>
<span style="left:275px;top:539.90px;font-size:8.4px;color:#e4e5ea;width:80px;text-align:center;font-family:"DejaVu Sans Condensed","DejaVu Sans","Liberation Sans",sans-serif;-webkit-text-stroke:0.1px currentColor;transform:none;">Array List</span>
<span style="left:331.5px;top:530.60px;font-size:8.4px;color:#e4e5ea;width:80px;text-align:center;font-family:"DejaVu Sans Condensed","DejaVu Sans","Liberation Sans",sans-serif;-webkit-text-stroke:0.1px currentColor;transform:none;">Add All in</span>
<span style="left:331.5px;top:539.90px;font-size:8.4px;color:#e4e5ea;width:80px;text-align:center;font-family:"DejaVu Sans Condensed","DejaVu Sans","Liberation Sans",sans-serif;-webkit-text-stroke:0.1px currentColor;transform:none;">Array List</span>
<span style="left:275px;top:600.90px;font-size:8.4px;color:#e4e5ea;width:80px;text-align:center;font-family:"DejaVu Sans Condensed","DejaVu Sans","Liberation Sans",sans-serif;-webkit-text-stroke:0.1px currentColor;transform:none;">Set Array</span>
<span style="left:275px;top:610.20px;font-size:8.4px;color:#e4e5ea;width:80px;text-align:center;font-family:"DejaVu Sans Condensed","DejaVu Sans","Liberation Sans",sans-serif;-webkit-text-stroke:0.1px currentColor;transform:none;">List Index</span>
<span style="left:331.5px;top:600.90px;font-size:8.4px;color:#e4e5ea;width:80px;text-align:center;font-family:"DejaVu Sans Condensed","DejaVu Sans","Liberation Sans",sans-serif;-webkit-text-stroke:0.1px currentColor;transform:none;">Remove</span>
<span style="left:331.5px;top:610.20px;font-size:8.4px;color:#e4e5ea;width:80px;text-align:center;font-family:"DejaVu Sans Condensed","DejaVu Sans","Liberation Sans",sans-serif;-webkit-text-stroke:0.1px currentColor;transform:none;">Array List</span>
<span style="left:331.5px;top:619.50px;font-size:8.4px;color:#e4e5ea;width:80px;text-align:center;font-family:"DejaVu Sans Condensed","DejaVu Sans","Liberation Sans",sans-serif;-webkit-text-stroke:0.1px currentColor;transform:none;">Item</span>
<span style="left:828px;top:122.30px;font-size:10px;color:#e4e5ea;letter-spacing:0.780px;-webkit-text-stroke:0.1px currentColor;transform:none;">CONDITION PROPERTIES</span>
<span style="left:831.25px;top:140.50px;font-size:9.29px;color:#5b97ee;">Condition</span>
<span style="left:881.25px;top:140.50px;font-size:10.53px;color:#36424c;">urlsplit(1)</span>
<span style="left:931.8px;top:140.30px;font-size:11.22px;color:#3d3a33;letter-spacing:0.141px;-webkit-text-stroke:0.35px currentColor;">!=</span>
<span style="left:945px;top:140.50px;font-size:10.12px;color:#fff;">api</span>
<span style="left:637.75px;top:111.20px;font-size:8.6px;color:#e4e5ea;">$_ENV</span>
<span style="left:637.75px;top:128.80px;font-size:8.45px;color:#e4e5ea;">$_COOKIE</span>
<span style="left:588.25px;top:209.75px;font-size:9.15px;color:#f2f2f5;letter-spacing:0.043px;-webkit-text-stroke:0.42px currentColor;">Set Value</span>
<span style="left:588.25px;top:223.40px;font-size:8.41px;color:#a3a6b0;">urlsplit = {{$_SERVER.URL.split(&#x27;/&#x27;)}}</span>
<span style="left:618.25px;top:278.00px;font-size:9.15px;color:#f2f2f5;letter-spacing:0.180px;-webkit-text-stroke:0.42px currentColor;">Condition</span>
<span style="left:618.25px;top:291.60px;font-size:8.83px;color:#a3a6b0;">{{urlsplit(1)!=&#x27;api&#x27;}}</span>
<span style="left:599.25px;top:364.75px;font-size:9.15px;color:#f2f2f5;letter-spacing:0.065px;-webkit-text-stroke:0.42px currentColor;">Database Single Query:</span>
<span style="left:599.25px;top:378.40px;font-size:8.34px;color:#a3a6b0;">global_seo_query</span>
<span style="left:614.25px;top:433.25px;font-size:9.15px;color:#f2f2f5;letter-spacing:0.242px;-webkit-text-stroke:0.42px currentColor;">Condition</span>
<span style="left:614.25px;top:446.90px;font-size:8.49px;color:#a3a6b0;">{{global_seo_query}}</span>
<span style="left:553.5px;top:533.00px;font-size:8.25px;color:#e4e5ea;">have tags</span>
<span style="left:678px;top:530.75px;font-size:9.15px;color:#f2f2f5;letter-spacing:0.135px;-webkit-text-stroke:0.42px currentColor;">Database Insert:</span>
<span style="left:678px;top:544.40px;font-size:8.7px;color:#a3a6b0;">insert</span>
<span style="left:676.75px;top:593.00px;font-size:9.15px;color:#f2f2f5;letter-spacing:-0.066px;-webkit-text-stroke:0.42px currentColor;">Database S...</span>
<span style="left:676.75px;top:607.10px;font-size:8.24px;color:#a3a6b0;">global_seo_...</span>
<span style="left:12.4px;top:642.00px;font-size:7.61px;color:#e4e5ea;">6.3.1</span>
<span style="left:73.75px;top:646.60px;font-size:9.2px;color:#e4e5ea;letter-spacing:0.070px;word-spacing:2.2px;">Target: Development</span>
<span style="left:605.3px;top:646.60px;font-size:9.2px;color:#e4e5ea;letter-spacing:-0.107px;">Publish</span>
<span style="left:672.8px;top:646.60px;font-size:9.2px;color:#e4e5ea;letter-spacing:0.201px;">Output</span>
<span style="left:730.4px;top:646.60px;font-size:9.2px;color:#5b97ee;letter-spacing:-0.117px;">Local Web Server</span>
<span style="left:874.3px;top:646.60px;font-size:9.2px;color:#e4e5ea;letter-spacing:-0.128px;">System</span>
<span style="left:907px;top:646.60px;font-size:9.0px;color:#e4e5ea;">Check</span>
<span style="left:623.25px;top:167.80px;font-size:8.2px;color:#fff;">EXECUTE</span>
<span style="left:631.25px;top:322.80px;font-size:8.45px;color:#fff;">THEN</span>
<span style="left:553px;top:488.60px;font-size:8.73px;color:#fff;">THEN</span>
<span style="left:688.75px;top:488.60px;font-size:8.18px;color:#fff;letter-spacing:-0.142px;">ELSE</span>
<span style="left:25.0px;top:602.50px;font-size:5.98px;color:#fff;font-weight:700;letter-spacing:-0.291px;">Pro</span>
<span style="left:599.2px;top:285.00px;font-size:19.5px;color:#f0a855;font-weight:700;line-height:20px;height:20px;margin-top:-3px;">?</span>
<span style="left:595.8px;top:440.00px;font-size:19.5px;color:#d8984f;font-weight:700;line-height:20px;height:20px;margin-top:-3px;">?</span>
<span style="left:1001.6px;top:140.00px;font-size:12.5px;color:#fff;">{</span>
<span style="left:1012.4px;top:140.00px;font-size:12.5px;color:#fff;">}</span>
</div></body></html>
